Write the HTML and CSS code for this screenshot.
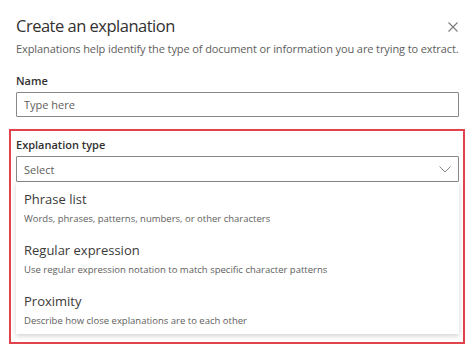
FILE: index.html
```html
<!DOCTYPE html>
<html>
<head>
  <meta charset="utf-8">
  <link rel="stylesheet" href="styles.css">
</head>
<body>
  <div class="panel">
    <div class="header">
      <div class="title">Create an explanation</div>
      <button class="close-btn" title="Close">
        <svg width="10" height="10" viewBox="0 0 10 10"><path d="M0.5 0.5 L9.5 9.5 M9.5 0.5 L0.5 9.5" stroke="#7a7a7a" stroke-width="1.1" fill="none"/></svg>
      </button>
    </div>
    <div class="subtitle">Explanations help identify the type of document or information you are trying to extract.</div>

    <div class="field">
      <div class="label">Name</div>
      <div class="input">Type here</div>
    </div>

    <div class="field highlight">
      <div class="label">Explanation type</div>
      <div class="input select">
        <span>Select</span>
        <svg width="12" height="7" viewBox="0 0 12 7"><path d="M0.5 0.5 L6 6 L11.5 0.5" stroke="#8a8886" stroke-width="1" fill="none"/></svg>
      </div>
      <div class="dropdown">
        <div class="option">
          <div class="option-title">Phrase list</div>
          <div class="option-desc">Words, phrases, patterns, numbers, or other characters</div>
        </div>
        <div class="option">
          <div class="option-title">Regular expression</div>
          <div class="option-desc">Use regular expression notation to match specific character patterns</div>
        </div>
        <div class="option">
          <div class="option-title">Proximity</div>
          <div class="option-desc">Describe how close explanations are to each other</div>
        </div>
      </div>
    </div>
  </div>
</body>
</html>
```

FILE: styles.css
```css
* {
  margin: 0;
  padding: 0;
  box-sizing: border-box;
}

body {
  width: 474px;
  height: 352px;
  background: #fff;
  font-family: 'Open Sans', 'Noto Sans', sans-serif;
  color: #323130;
  overflow: hidden;
}

.panel {
  padding: 11px 15px 0 16px;
}

.header {
  display: flex;
  align-items: center;
  justify-content: space-between;
  height: 28px;
}

.title {
  font-size: 16.5px;
  font-weight: 500;
  letter-spacing: -0.5px;
  color: #323130;
}

.close-btn {
  border: none;
  background: none;
  width: 12px;
  height: 12px;
  margin-top: 3px;
  display: flex;
  align-items: center;
  justify-content: center;
}

.subtitle {
  font-size: 11px;
  color: #605e5c;
  margin-top: 2px;
  letter-spacing: -0.1px;
}

.field {
  margin-top: 17px;
}

.label {
  font-size: 11px;
  font-weight: 600;
  color: #323130;
  margin-bottom: 4px;
}

.input {
  height: 25px;
  border: 1px solid #8a8886;
  border-radius: 1px;
  padding: 0 7px;
  display: flex;
  align-items: center;
  font-size: 11px;
  color: #605e5c;
}

.select {
  height: 26px;
  justify-content: space-between;
}

.highlight {
  margin: 12px -6px 0 -7px;
  padding: 6px 4px 8px 5px;
  border: 2px solid #e0434c;
}

.dropdown {
  background: #fff;
  box-shadow: 0 2px 5px rgba(0, 0, 0, 0.18);
  padding-top: 3px;
}

.option {
  padding: 5px 8px 0;
  height: 51px;
}

.option:last-child {
  height: 47px;
}

.option-title {
  font-size: 13px;
  color: #3b3a39;
}

.option-desc {
  font-size: 9.5px;
  color: #605e5c;
  margin-top: 4px;
}
```
